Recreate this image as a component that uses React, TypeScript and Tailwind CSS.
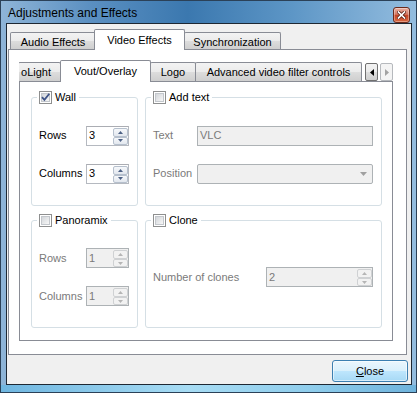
import React from "react";

function Check({ checked }: { checked?: boolean }) {
  return (
    <span className="relative flex h-[13px] w-[13px] shrink-0 border border-[#8e8f8f] bg-white p-[1px]">
      <span className="flex-1 border border-[#c3c7cc] bg-[linear-gradient(135deg,#d3d6da,#f7f7f7)]" />
      {checked && (
        <svg className="absolute left-0 top-0" width="11" height="11" viewBox="0 0 11 11">
          <path d="M2 5.2 L4.4 7.9 L9.3 1.8" fill="none" stroke="#3f5487" strokeWidth="1.8" />
        </svg>
      )}
    </span>
  );
}

function Spin({ value, disabled, wide }: { value: string; disabled?: boolean; wide?: boolean }) {
  const box = disabled ? "border-[#adb2b5] bg-[#f0f0f0] text-[#7a7a7a]" : "border-[#b5b9c0] border-t-[#abadb3] bg-white text-black";
  const btn = disabled ? "border-[#cfd1d3] bg-[#f2f2f2]" : "border-[#b6c0cd] bg-[linear-gradient(#f6f8fb,#e2e7ee)]";
  const arrow = disabled ? "#b5b5b5" : "#4d6185";
  return (
    <div className={`flex h-[20px] shrink-0 border ${wide ? "w-[107px]" : "w-[43px]"} ${box}`}>
      <div className="flex flex-1 items-center pl-[2px]">{value}</div>
      <div className="flex w-[15px] shrink-0 flex-col pt-[1px]">
        <div className={`flex h-[9px] items-center justify-center rounded-[2px] border ${btn}`}>
          <svg width="5" height="3" viewBox="0 0 5 3">
            <path d="M0 3 L2.5 0 L5 3Z" fill={arrow} />
          </svg>
        </div>
        <div className={`flex h-[8px] items-center justify-center rounded-[2px] border ${btn}`}>
          <svg width="5" height="3" viewBox="0 0 5 3">
            <path d="M0 0 L2.5 3 L5 0Z" fill={arrow} />
          </svg>
        </div>
      </div>
    </div>
  );
}

function Group({ title, checked, children }: { title: string; checked?: boolean; children: React.ReactNode }) {
  return (
    <fieldset className="flex h-full min-w-0 flex-col rounded-[3px] border border-[#d5dfe5] px-[5px]">
      <legend className="flex h-[14px] items-center gap-[3px] pl-[2px] pr-[3px] text-black">
        <Check checked={checked} />
        <span>{title}</span>
      </legend>
      {children}
    </fieldset>
  );
}

const tabOff =
  "flex items-center justify-center rounded-t-[2px] border border-b-0 border-[#898c95] bg-[linear-gradient(#f3f3f3,#ebebeb_50%,#dddddd_50%,#cfcfcf)] shrink-0";
const tabOn =
  "relative z-10 flex items-center justify-center rounded-t-[2px] border border-b-0 border-[#898c95] bg-white shrink-0";

export default function App() {
  return (
    <div className="flex h-[393px] w-[417px] flex-col overflow-hidden bg-[linear-gradient(90deg,#8fb5d8,#5a8fc1_22%,#3b78af_45%,#5d96c6_70%,#94bddf)] shadow-[inset_0_0_0_1px_#2b4158] font-['Liberation_Sans',Arial,sans-serif]">
      {/* title bar */}
      <div className="flex h-[23px] shrink-0 items-start justify-between pl-[8px] pr-[7px]">
        <span className="mt-[6px] text-[12px] leading-[15px] text-black">Adjustments and Effects</span>
        <div className="mt-[7px] flex h-[16px] w-[17px] items-center justify-center rounded-[3px] border border-[#6a2a1c] bg-[linear-gradient(#eab0a2,#d57863_45%,#c44426_52%,#d9673f)] shadow-[inset_0_0_0_1px_rgba(255,255,255,0.35)]">
          <svg width="9" height="8" viewBox="0 0 9 8">
            <path d="M1.5 1 L7.5 7 M7.5 1 L1.5 7" stroke="#5a1d12" strokeWidth="3.2" strokeLinecap="square" />
            <path d="M1.5 1 L7.5 7 M7.5 1 L1.5 7" stroke="#ffffff" strokeWidth="1.7" strokeLinecap="square" />
          </svg>
        </div>
      </div>

      {/* client area */}
      <div className="ml-[6px] mr-[5px] flex h-[362px] shrink-0 flex-col border border-[#1e2833] bg-[#f0f0f0] pl-[1px] pr-[4px] pt-[5px] pb-[2px] text-[11px] leading-[13px] text-black">
        {/* outer tab bar */}
        <div className="flex h-[20px] shrink-0 items-end">
          <div className={`${tabOff} ml-[2px] h-[17px] w-[86px] pt-[2px]`}>Audio Effects</div>
          <div className={`${tabOn} -mb-[1px] -ml-[2px] h-[21px] w-[91px] pt-[1px]`}>Video Effects</div>
          <div className={`${tabOff} -ml-[1px] h-[17px] w-[97px] pt-[2px]`}>Synchronization</div>
        </div>
        {/* outer pane */}
        <div className="flex h-[306px] shrink-0 flex-col border border-[#898c95] bg-white pl-[10px] pr-[13px] pt-[10px]">
          {/* inner tab bar */}
          <div className="flex h-[21px] shrink-0 items-start">
            <div className="relative z-10 flex h-[22px] w-[344px] shrink-0 items-end overflow-hidden">
              <div className={`${tabOff} -ml-[1px] mb-[1px] h-[19px] w-[43px] !justify-end pr-[9px]`}>
                <span className="whitespace-nowrap">oLight</span>
              </div>
              <div className={`${tabOn} -ml-[1px] h-[22px] w-[91px]`}>Vout/Overlay</div>
              <div className={`${tabOff} -ml-[1px] mb-[1px] h-[19px] w-[46px]`}>Logo</div>
              <div className={`${tabOff} -ml-[1px] mb-[1px] h-[19px] w-[167px]`}>
                <span className="whitespace-nowrap">Advanced video filter controls</span>
              </div>
            </div>
            <div className="ml-[2px] mt-[3px] flex h-[18px] w-[13px] shrink-0 items-center justify-center rounded-[2px] border border-[#707070] bg-[linear-gradient(#f2f2f2,#ebebeb_50%,#dddddd_50%,#cfcfcf)]">
              <svg width="4" height="7" viewBox="0 0 4 7">
                <path d="M4 0 L0 3.5 L4 7Z" fill="#000" />
              </svg>
            </div>
            <div className="ml-[2px] mt-[3px] flex h-[18px] w-[13px] shrink-0 items-center justify-center rounded-[2px] border border-[#b6b9bd] bg-[#f4f4f4]">
              <svg width="4" height="7" viewBox="0 0 4 7">
                <path d="M0 0 L4 3.5 L0 7Z" fill="#a3a3a3" />
              </svg>
            </div>
          </div>
          {/* inner pane */}
          <div className="grid h-[260px] shrink-0 grid-cols-[107px_237px] grid-rows-[116px_115px] gap-x-[7px] gap-y-[7px] border border-[#898c95] bg-white pb-[12px] pl-[11px] pr-[10px] pt-[8px]">
            <Group title="Wall" checked>
              <div className="flex flex-1 flex-col justify-center gap-[18px] pl-[2px]">
                <div className="flex h-[20px] items-center">
                  <span className="w-[47px] shrink-0">Rows</span>
                  <Spin value="3" />
                </div>
                <div className="flex h-[20px] items-center">
                  <span className="w-[47px] shrink-0">Columns</span>
                  <Spin value="3" />
                </div>
              </div>
            </Group>
            <Group title="Add text">
              <div className="flex flex-1 flex-col justify-center gap-[18px] pl-[2px] pr-[3px] text-[#7a7a7a]">
                <div className="flex h-[20px] items-center">
                  <span className="w-[44px] shrink-0">Text</span>
                  <div className="flex h-[20px] flex-1 items-center border border-[#adb2b5] bg-[#f0f0f0] pl-[2px]">VLC</div>
                </div>
                <div className="flex h-[20px] items-center">
                  <span className="w-[44px] shrink-0">Position</span>
                  <div className="flex h-[20px] flex-1 items-center justify-end rounded-[2px] border border-[#adb2b5] bg-[#f0f0f0] pr-[5px]">
                    <svg width="7" height="4" viewBox="0 0 7 4">
                      <path d="M0 0 L3.5 4 L7 0Z" fill="#a0a0a0" />
                    </svg>
                  </div>
                </div>
              </div>
            </Group>
            <Group title="Panoramix">
              <div className="flex flex-1 flex-col justify-center gap-[18px] pl-[2px] text-[#7a7a7a]">
                <div className="flex h-[20px] items-center">
                  <span className="w-[47px] shrink-0">Rows</span>
                  <Spin value="1" disabled />
                </div>
                <div className="flex h-[20px] items-center">
                  <span className="w-[47px] shrink-0">Columns</span>
                  <Spin value="1" disabled />
                </div>
              </div>
            </Group>
            <Group title="Clone">
              <div className="flex flex-1 flex-col justify-center pl-[2px] text-[#7a7a7a]">
                <div className="flex h-[20px] items-center">
                  <span className="w-[113px] shrink-0">Number of clones</span>
                  <Spin value="2" disabled wide />
                </div>
              </div>
            </Group>
          </div>
        </div>
        {/* button row */}
        <div className="-mr-[1px] mt-[5px] flex shrink-0 justify-end">
          <button className="flex h-[22px] w-[76px] items-center justify-center rounded-[3px] border border-[#3c7fb1] bg-[linear-gradient(#eaf6fd,#d9f0fc_50%,#bee6fd_50%,#a7d9f5)] text-[11px] text-black shadow-[inset_0_0_0_1px_rgba(255,255,255,0.55)]">
            <span>
              <span className="underline">C</span>lose
            </span>
          </button>
        </div>
      </div>
      {/* bottom frame */}
      <div className="mx-[1px] mb-[1px] flex-1 bg-[linear-gradient(90deg,#6fb6e0,#a7dcf4_45%,#8fcdec_75%,#6fb3dc)]" />
    </div>
  );
}
